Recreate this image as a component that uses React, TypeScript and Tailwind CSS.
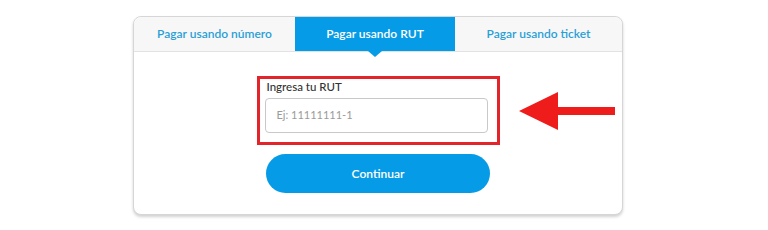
export default function App() {
  const tabs = ["Pagar usando número", "Pagar usando RUT", "Pagar usando ticket"];
  return (
    <div className="relative h-[230px] w-[768px] bg-white" style={{ fontFamily: "Lato, 'Noto Sans', sans-serif" }}>
      <div className="absolute left-[133px] top-[16px] h-[199px] w-[490px] rounded-[8px] border border-[#d6d6d6] bg-white shadow-[0_2px_3px_rgba(0,0,0,0.18)]">
        {/* Tabs */}
        <div className="flex h-[35px] rounded-t-[8px] border-b border-[#e2e2e2] bg-[#f7f7f7]">
          {tabs.map((t, i) => (
            <div
              key={t}
              className={
                i === 1
                  ? "relative flex w-[160px] items-center justify-center bg-[#069be6] text-[12px] font-semibold text-white"
                  : i === 0
                  ? "flex w-[161px] items-center justify-center text-[12px] font-semibold text-[#2a9fd6]"
                  : "flex flex-1 items-center justify-center text-[12px] font-semibold text-[#2a9fd6]"
              }
            >
              {t}
              {i === 1 && (
                <span className="absolute left-1/2 top-full h-0 w-0 -translate-x-1/2 border-x-[7px] border-t-[6px] border-x-transparent border-t-[#069be6]" />
              )}
            </div>
          ))}
        </div>

        {/* Form */}
        <div className="flex flex-col items-center pt-[24px]">
          <div className="flex w-[243px] flex-col border-[3px] border-[#e3242b] pb-[9px] pl-[5px] pr-[9px] pt-[1px]">
            <label className="pl-[2px] text-[11.5px] leading-[14px] font-medium text-[#333]">Ingresa tu RUT</label>
            <div className="mt-[4px] flex h-[35px] items-center rounded-[4px] border border-[#c9c9c9] px-[11px] text-[11px] text-[#9a9a9a]">
              Ej: 11111111-1
            </div>
          </div>
          <button className="mt-[9px] flex h-[39px] w-[224px] items-center justify-center rounded-full bg-[#069be6] text-[12px] font-semibold text-white">
            Continuar
          </button>
        </div>
      </div>

      {/* Arrow */}
      <svg className="absolute left-[517px] top-[90px]" width="100" height="42" viewBox="0 0 100 42">
        <polygon points="2,21 41,2 41,17 98,17 98,25 41,25 41,40" fill="#ef1c1c" />
      </svg>
    </div>
  );
}
